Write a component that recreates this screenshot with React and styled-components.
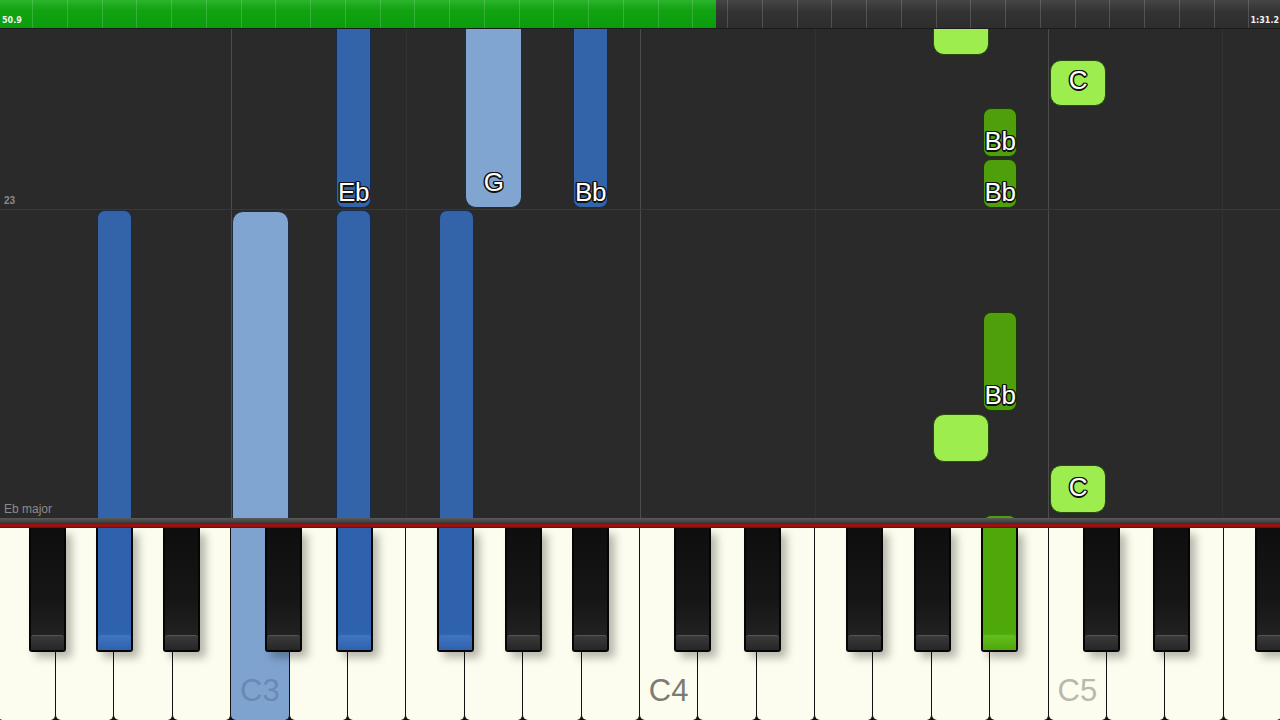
import React from 'react'
import styled, { createGlobalStyle } from 'styled-components'

const GlobalStyle = createGlobalStyle`
html, body {
  margin: 0;
  padding: 0;
  background: #2a2a2a;
  overflow: hidden;
}
`

const palette = {
  blue: { fill: '#3363a9', edge: '#172c4d', key: '#2f62ad', bevel: '#3f74c0' },
  lightBlue: { fill: '#80a5d0', edge: '#1d2c40', key: '#7fa3cf' },
  green: { fill: '#4f9f0c', edge: '#1d3a06', key: '#4ea80a', bevel: '#62be1c' },
  lightGreen: { fill: '#9eed4f', edge: '#2a4a12', key: '#9eed4f' },
}

const KEY_W = 58.4
const KEY_X0 = -2.4
const ROLL_TOP = 29

const whites = ['F2', 'G2', 'A2', 'B2', 'C3', 'D3', 'E3', 'F3', 'G3', 'A3', 'B3', 'C4', 'D4', 'E4', 'F4', 'G4', 'A4', 'B4', 'C5', 'D5', 'E5', 'F5', 'G5']
const sharpOffset = { C: -6, D: 6, F: -9, G: 0, A: 9 }
const activeWhite = { C3: 'lightBlue' }
const activeBlack = { G2: 'blue', D3: 'blue', F3: 'blue', A4: 'green' }
const labelColor = { C3: '#6a89b2', C4: '#7b7b74', C5: '#b8b8af' }

const notes = [
  { x: 97, w: 35, top: 210, bottom: 540, c: 'blue' },
  { x: 232, w: 57, top: 211, bottom: 540, c: 'lightBlue' },
  { x: 336, w: 35, top: 10, bottom: 208, c: 'blue', label: 'Eb' },
  { x: 336, w: 35, top: 210, bottom: 540, c: 'blue' },
  { x: 465, w: 57, top: 10, bottom: 208, c: 'lightBlue', label: 'G' },
  { x: 439, w: 35, top: 210, bottom: 540, c: 'blue' },
  { x: 573, w: 35, top: 10, bottom: 208, c: 'blue', label: 'Bb' },
  { x: 933, w: 56, top: 10, bottom: 55, c: 'lightGreen' },
  { x: 1050, w: 56, top: 60, bottom: 106, c: 'lightGreen', label: 'C' },
  { x: 983, w: 34, top: 108, bottom: 157, c: 'green', label: 'Bb' },
  { x: 983, w: 34, top: 159, bottom: 208, c: 'green', label: 'Bb' },
  { x: 983, w: 34, top: 312, bottom: 411, c: 'green', label: 'Bb' },
  { x: 933, w: 56, top: 414, bottom: 462, c: 'lightGreen' },
  { x: 1050, w: 56, top: 465, bottom: 513, c: 'lightGreen', label: 'C' },
  { x: 983, w: 34, top: 515, bottom: 540, c: 'green' },
]

const gridLines = [
  { x: 231, strong: true },
  { x: 406 },
  { x: 640, strong: true },
  { x: 815 },
  { x: 1048, strong: true },
  { x: 1222 },
]

const Screen = styled.div`
  width: 1280px;
  height: 720px;
  display: flex;
  flex-direction: column;
  background: #2a2a2a;
  font-family: "Liberation Sans", Arial, sans-serif;
  overflow: hidden;
`

const TopBar = styled.div`
  position: relative;
  height: 28px;
  flex: none;
  background: linear-gradient(#454545, #343434 40%, #2d2d2d);
  border-bottom: 1px solid #1c1c1c;
  overflow: hidden;
`

const Fill = styled.div`
  height: 100%;
  background: linear-gradient(#2cb52c, #12a312 35%, #0a9c0a);
`

const Ticks = styled.div`
  position: absolute;
  inset: 0;
  display: flex;
  padding-left: 32px;
`

const Tick = styled.div`
  flex: none;
  width: 33.75px;
  border-left: 1px solid rgba(255, 255, 255, 0.16);
`

const TimeText = styled.span`
  position: absolute;
  bottom: 3px;
  ${(p) => (p.$right ? 'right: 1px;' : 'left: 2px;')}
  font-family: "DejaVu Sans", sans-serif;
  font-size: 8px;
  font-weight: bold;
  color: #f0f0f0;
  white-space: nowrap;
`

const Roll = styled.div`
  position: relative;
  flex: none;
  height: 489px;
  background: #2a2a2a;
  overflow: hidden;
`

const VLine = styled.div`
  position: absolute;
  top: 0;
  bottom: 0;
  width: 1px;
  background: ${(p) => (p.$strong ? '#4c4c4c' : '#323232')};
`

const HLine = styled.div`
  position: absolute;
  left: 0;
  right: 0;
  height: 1px;
  background: #383838;
`

const Marker = styled.span`
  position: absolute;
  left: 4px;
  font-size: ${(p) => p.$size}px;
  color: #8a8a8a;
  font-weight: ${(p) => (p.$bold ? 'bold' : 'normal')};
`

const Note = styled.div`
  position: absolute;
  box-sizing: border-box;
  display: flex;
  align-items: flex-end;
  justify-content: center;
  background: ${(p) => palette[p.$c].fill};
  border: 1px solid ${(p) => palette[p.$c].edge};
  border-radius: ${(p) => (p.$wide ? 11 : 8)}px;
  padding-bottom: ${(p) => (p.$wide ? 10 : 0)}px;
`

const NoteLabel = styled.span`
  font-size: 26px;
  line-height: 30px;
  color: #fff;
  letter-spacing: -0.5px;
  text-shadow:
    -1px -1px 0 #111, 1px -1px 0 #111, -1px 1px 0 #111, 1px 1px 0 #111,
    0 -1.5px 0 #111, 0 1.5px 0 #111, -1.5px 0 0 #111, 1.5px 0 0 #111;
`

const Keyboard = styled.div`
  flex: 1;
  display: flex;
  flex-direction: column;
  background: #111;
`

const Rail = styled.div`
  height: 5px;
  background: linear-gradient(#5a5a5a, #3a3a3a);
`

const Felt = styled.div`
  height: 5px;
  background: linear-gradient(#8a0c0c, #a81414 60%, #6a0808);
`

const Keys = styled.div`
  position: relative;
  flex: 1;
  display: flex;
  margin-left: ${KEY_X0}px;
`

const WhiteKey = styled.div`
  position: relative;
  flex: none;
  width: ${KEY_W}px;
  box-sizing: border-box;
  background: ${(p) => (p.$c ? palette[p.$c].key : '#fdfdef')};
  border-right: 1.5px solid #121212;
  border-radius: 0 0 5px 5px;
  display: flex;
  align-items: flex-end;
  justify-content: center;
`

const KeyName = styled.span`
  font-size: 31px;
  line-height: 1;
  margin-bottom: 14px;
  color: ${(p) => p.$color};
`

const BlackKey = styled.div`
  position: absolute;
  top: 0;
  width: 37px;
  height: 124px;
  box-sizing: border-box;
  border: 2px solid #050505;
  border-top: none;
  border-radius: 0 0 3px 3px;
  background: ${(p) =>
    p.$c
      ? `linear-gradient(${palette[p.$c].key}, ${palette[p.$c].key} 85%, ${palette[p.$c].bevel})`
      : 'linear-gradient(#0e0e0e, #161616 60%, #262626)'};
  box-shadow: 6px 6px 8px rgba(0, 0, 0, 0.28);

  &::after {
    content: '';
    position: absolute;
    left: 0;
    right: 0;
    bottom: 0;
    height: 14px;
    border-top: 1px solid ${(p) => (p.$c ? palette[p.$c].bevel : '#555')};
    background: ${(p) =>
      p.$c
        ? `linear-gradient(${palette[p.$c].bevel}, ${palette[p.$c].key})`
        : 'linear-gradient(#3a3a3a, #262626)'};
    border-radius: 3px 3px 0 0;
  }
`

const PianoRoll = () => (
  <Roll>
    {gridLines.map((g) => (
      <VLine key={g.x} $strong={g.strong} style={{ left: g.x }} />
    ))}
    <HLine style={{ top: 209 - ROLL_TOP }} />
    <Marker $size={10} $bold style={{ top: 195 - ROLL_TOP }}>23</Marker>
    <Marker $size={12} style={{ top: 502 - ROLL_TOP }}>Eb major</Marker>
    {notes.map((n, i) => (
      <Note
        key={i}
        $c={n.c}
        $wide={n.w > 40}
        style={{ left: n.x, width: n.w, top: n.top - ROLL_TOP, height: n.bottom - n.top }}
      >
        {n.label && <NoteLabel>{n.label}</NoteLabel>}
      </Note>
    ))}
  </Roll>
)

const Piano = () => (
  <Keyboard>
    <Rail />
    <Felt />
    <Keys>
      {whites.map((name) => (
        <WhiteKey key={name} $c={activeWhite[name]}>
          {labelColor[name] && <KeyName $color={labelColor[name]}>{name}</KeyName>}
        </WhiteKey>
      ))}
      {whites.map((name, i) => {
        const off = sharpOffset[name[0]]
        if (off === undefined) return null
        const center = KEY_W * (i + 1) + off
        return <BlackKey key={name + '#'} $c={activeBlack[name]} style={{ left: center - 18.5 }} />
      })}
    </Keys>
  </Keyboard>
)

const App = () => {
  return (
    <Screen>
      <GlobalStyle />
      <TopBar>
        <Fill style={{ width: 716 }} />
        <Ticks>
          {Array.from({ length: 38 }).map((_, i) => (
            <Tick key={i} />
          ))}
        </Ticks>
        <TimeText>50.9</TimeText>
        <TimeText $right>1:31.2</TimeText>
      </TopBar>
      <PianoRoll />
      <Piano />
    </Screen>
  )
}

export default App
